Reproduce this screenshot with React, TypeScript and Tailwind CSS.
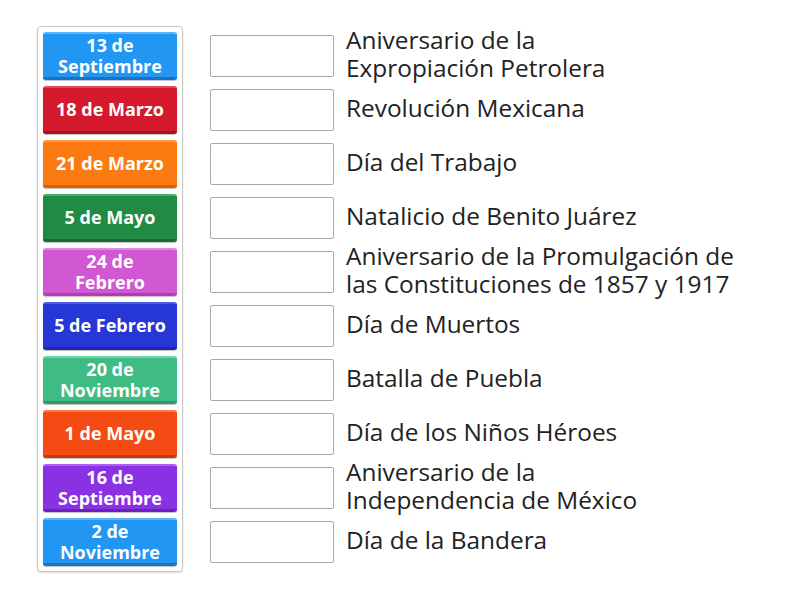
const ITEMS = [
  { label: '13 de Septiembre', color: 'bg-[#2196f3] border-t-[#5bb5f7] border-b-[#1673c4]' },
  { label: '18 de Marzo', color: 'bg-[#d4192c] border-t-[#e04a58] border-b-[#a5101f]' },
  { label: '21 de Marzo', color: 'bg-[#fb7b12] border-t-[#fd9a45] border-b-[#d8620a]' },
  { label: '5 de Mayo', color: 'bg-[#218b44] border-t-[#3fb463] border-b-[#186b33]' },
  { label: '24 de Febrero', color: 'bg-[#d257d3] border-t-[#e08ae1] border-b-[#b23cb4]' },
  { label: '5 de Febrero', color: 'bg-[#2537d4] border-t-[#4b5be2] border-b-[#1a28a8]' },
  { label: '20 de Noviembre', color: 'bg-[#3fbc83] border-t-[#6fd5a6] border-b-[#2f9a68]' },
  { label: '1 de Mayo', color: 'bg-[#f44b14] border-t-[#f87a4c] border-b-[#c9390a]' },
  { label: '16 de Septiembre', color: 'bg-[#8a31e4] border-t-[#a763ef] border-b-[#6c20ba]' },
  { label: '2 de Noviembre', color: 'bg-[#2196f3] border-t-[#5bb5f7] border-b-[#1673c4]' },
];

const TARGETS = [
  'Aniversario de la\nExpropiación Petrolera',
  'Revolución Mexicana',
  'Día del Trabajo',
  'Natalicio de Benito Juárez',
  'Aniversario de la Promulgación de\nlas Constituciones de 1857 y 1917',
  'Día de Muertos',
  'Batalla de Puebla',
  'Día de los Niños Héroes',
  'Aniversario de la\nIndependencia de México',
  'Día de la Bandera',
];

export default function App() {
  return (
    <div className="w-[800px] h-[600px] bg-white flex items-start pt-[26px] pl-[37px] font-['Open_Sans',sans-serif]">
      {/* Draggable answers */}
      <div className="w-[146px] p-[5px] border border-[#c8c8c8] rounded-[4px] flex flex-col gap-[6px] shadow-[0_1px_2px_rgba(0,0,0,0.15)]">
        {ITEMS.map(item => (
          <div
            key={item.label}
            className={`${item.color} h-[48px] rounded-[3px] border-t-2 border-b-[3px] flex items-center justify-center text-center text-white font-bold text-[18px] leading-[21px] px-2 shadow-[0_1px_1px_rgba(0,0,0,0.25)]`}
          >
            {item.label}
          </div>
        ))}
      </div>

      {/* Targets */}
      <div className="ml-[27px] pt-[6px] flex flex-col gap-[6px]">
        {TARGETS.map(t => (
          <div key={t} className="h-[48px] flex items-center gap-[12px]">
            <div className="w-[124px] h-[42px] border border-[#a9a9a9] rounded-[2px] bg-white flex-shrink-0" />
            <div className="text-[24.4px] leading-[28px] text-[#222] whitespace-pre-line -mt-[4px]">{t}</div>
          </div>
        ))}
      </div>
    </div>
  );
}
